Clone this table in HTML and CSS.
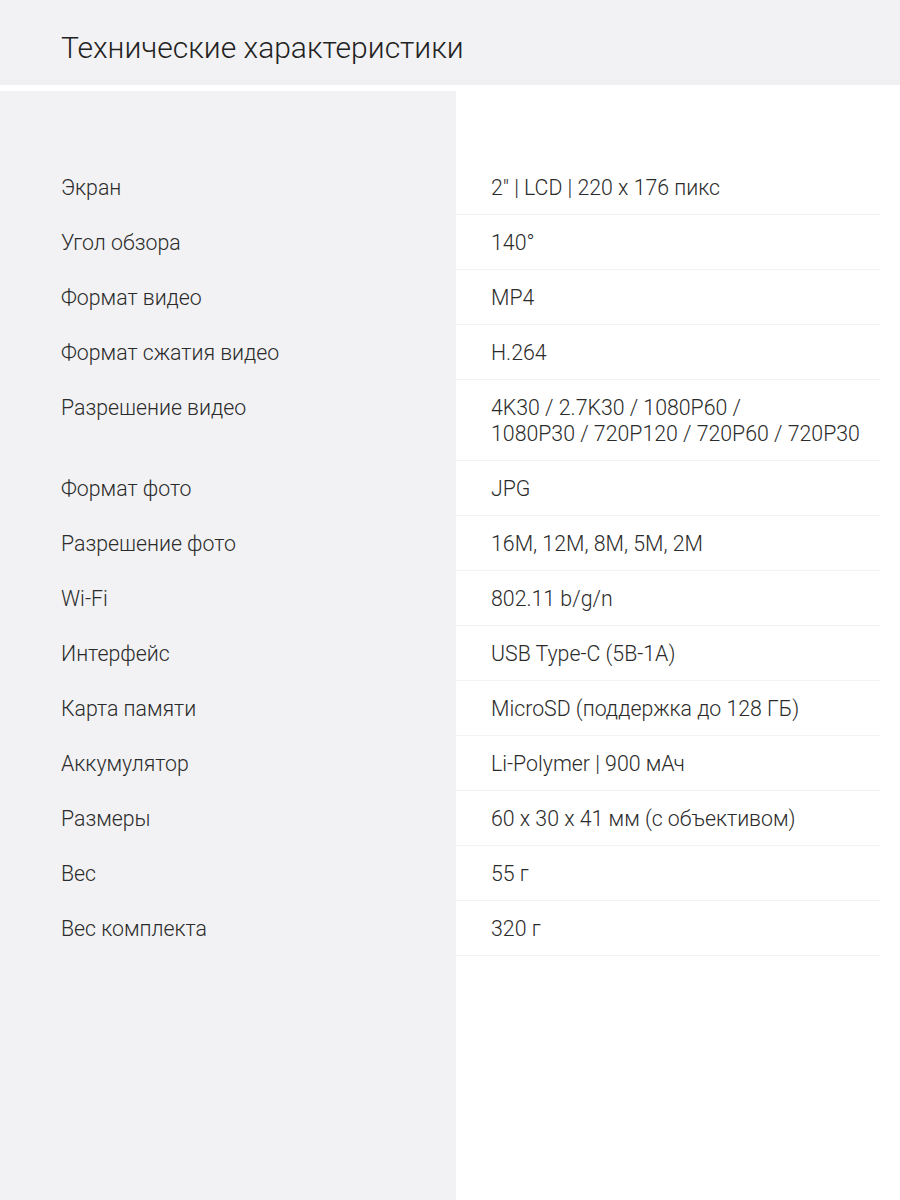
FILE: index.html
```html
<!DOCTYPE html>
<html lang="ru">
<head>
    <meta charset="UTF-8">
    <title>Технические характеристики</title>
    <link rel="stylesheet" href="styles.css">
</head>
<body>
    <div class="specs-header">
        <h2 class="specs-title">Технические характеристики</h2>
    </div>

    <div class="specs">
        <div class="spec-label">Экран</div>
        <div class="spec-value">2" | LCD | 220 x 176 пикс</div>

        <div class="spec-label">Угол обзора</div>
        <div class="spec-value">140°</div>

        <div class="spec-label">Формат видео</div>
        <div class="spec-value">MP4</div>

        <div class="spec-label">Формат сжатия видео</div>
        <div class="spec-value">H.264</div>

        <div class="spec-label">Разрешение видео</div>
        <div class="spec-value">4K30 / 2.7K30 / 1080P60 /<br>1080P30 / 720P120 / 720P60 / 720P30</div>

        <div class="spec-label">Формат фото</div>
        <div class="spec-value">JPG</div>

        <div class="spec-label">Разрешение фото</div>
        <div class="spec-value">16M, 12M, 8M, 5M, 2M</div>

        <div class="spec-label">Wi-Fi</div>
        <div class="spec-value">802.11 b/g/n</div>

        <div class="spec-label">Интерфейс</div>
        <div class="spec-value">USB Type-C (5B-1A)</div>

        <div class="spec-label">Карта памяти</div>
        <div class="spec-value">MicroSD (поддержка до 128 ГБ)</div>

        <div class="spec-label">Аккумулятор</div>
        <div class="spec-value">Li-Polymer | 900 мАч</div>

        <div class="spec-label">Размеры</div>
        <div class="spec-value">60 x 30 x 41 мм (с объективом)</div>

        <div class="spec-label">Вес</div>
        <div class="spec-value">55 г</div>

        <div class="spec-label">Вес комплекта</div>
        <div class="spec-value">320 г</div>
    </div>
</body>
</html>
```

FILE: styles.css
```css
body {
    margin: 0;
    background-color: #FFFFFF;
    font-family: 'Roboto', 'Liberation Sans', sans-serif;
    font-weight: 300;
    color: #2B2B2B;
}

.specs-header {
    height: 85px;
    padding: 14px 0 0 61px;
    box-sizing: border-box;
    display: flex;
    align-items: center;
    background-color: #F2F2F4;
    border-bottom: 5px solid #F0F0F2;
}

.specs-title {
    margin: 0;
    font-size: 30px;
    font-weight: 300;
    color: #222222;
}

/* gray label column runs down to the bottom of the page */
.specs {
    margin-top: 6px;
    min-height: calc(100vh - 91px);
    padding-top: 69px;
    box-sizing: border-box;
    display: grid;
    grid-template-columns: 456px 424px;
    align-content: start;
    background: linear-gradient(to right, #F2F2F4 456px, #FFFFFF 456px);
    font-size: 21.3px;
    line-height: 26px;
}

.spec-label {
    padding: 15px 0 14px 61px;
}

.spec-value {
    padding: 15px 0 13px 35px;
    border-bottom: 1px solid #F3F3F4;
}
```
